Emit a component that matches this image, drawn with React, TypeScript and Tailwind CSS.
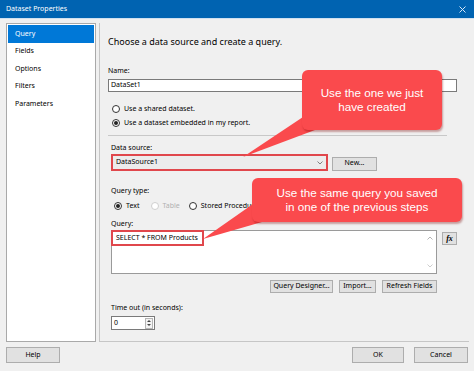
function Radio({ checked, disabled }: { checked?: boolean; disabled?: boolean }) {
  return (
    <span
      className={`flex items-center justify-center w-[8px] h-[8px] rounded-full border bg-white ${
        disabled ? "border-[#cfcfcf]" : "border-[#333]"
      }`}
    >
      {checked && <span className="w-[4px] h-[4px] rounded-full bg-[#222]" />}
    </span>
  );
}

function Btn({ label, className = "" }: { label: string; className?: string }) {
  return (
    <div
      className={`flex items-center justify-center bg-[#e1e1e1] border border-[#adadad] text-[7px] text-black ${className}`}
    >
      {label}
    </div>
  );
}

const navItems = ["Query", "Fields", "Options", "Filters", "Parameters"];

export default function App() {
  return (
    <div className="relative w-[474px] h-[371px] overflow-hidden bg-[#f0f0f0] font-['Noto_Sans',sans-serif] text-black">
      {/* Title bar */}
      <div className="flex items-center justify-between h-[19px] bg-[#0063b1] pl-[6px] pr-[8px] border-b border-[#cfe0f0]">
        <span className="text-[7px] text-white">Dataset Properties</span>
        <svg width="7" height="7" viewBox="0 0 7 7">
          <path d="M0.5 0.5 L6.5 6.5 M6.5 0.5 L0.5 6.5" stroke="#d6e8f8" strokeWidth="1" />
        </svg>
      </div>

      {/* Body */}
      <div className="flex pt-[4px] pl-[6px] pr-[5px]">
        {/* Nav */}
        <div className="w-[91px] h-[319px] border border-[#a9a9a9] bg-white p-px">
          {navItems.map((item, i) => (
            <div
              key={item}
              className={`flex items-center h-[17.5px] pl-[7px] text-[7px] ${
                i === 0 ? "bg-[#0078d7] text-white" : "text-black"
              }`}
            >
              {item}
            </div>
          ))}
        </div>

        {/* Content */}
        <div className="ml-[3px] flex-1 h-[319px] border-l border-b border-[#c6c6c6] pl-[8px] pr-[12px] flex flex-col">
          <div className="mt-[13px] h-[12px] leading-[12px] text-[9px]">
            Choose a data source and create a query.
          </div>
          <div className="mt-[18px] h-[10px] leading-[10px] text-[7px]">Name:</div>
          <div className="mt-[3px] h-[13px] border border-[#7a7a7a] bg-white flex items-center pl-[2px] text-[7px]">
            DataSet1
          </div>
          <div className="mt-[10px] h-[14px] flex items-center pl-[4px] gap-[4px] text-[7px]">
            <Radio />
            <span>Use a shared dataset.</span>
          </div>
          <div className="h-[14px] flex items-center pl-[4px] gap-[4px] text-[7px]">
            <Radio checked />
            <span>Use a dataset embedded in my report.</span>
          </div>
          <div className="mt-[5px] h-px bg-[#c8c8c8] mr-[10px]" />

          <div className="pl-[3px] flex flex-col">
            <div className="mt-[7px] h-[10px] leading-[10px] text-[7px]">Data source:</div>
            <div className="mt-px flex items-center">
              <div className="w-[217px] h-[17px] border-2 border-[#e0474c] bg-[#ececec] flex items-center justify-between pl-[3px] pr-[3px] text-[7px]">
                <span>DataSource1</span>
                <svg width="6" height="4" viewBox="0 0 6 4">
                  <path d="M0.5 0.5 L3 3 L5.5 0.5" stroke="#666" strokeWidth="0.8" fill="none" />
                </svg>
              </div>
              <Btn label="New..." className="ml-[4px] mt-[2px] w-[45px] h-[14px]" />
            </div>

            <div className="mt-[15px] h-[10px] leading-[10px] text-[7px]">Query type:</div>
            <div className="mt-[3px] h-[14px] flex items-center pl-[3px] text-[7px]">
              <Radio checked />
              <span className="ml-[4px]">Text</span>
              <span className="ml-[12px]">
                <Radio disabled />
              </span>
              <span className="ml-[3px] text-[#b0b0b0]">Table</span>
              <span className="ml-[9px]">
                <Radio />
              </span>
              <span className="ml-[4px]">Stored Procedure</span>
            </div>

            <div className="mt-[6px] h-[10px] leading-[10px] text-[7px]">Query:</div>
            <div className="mt-px flex items-start">
              <div className="relative w-[326px] h-[44px] border border-[#9a9a9a] bg-white">
                <div className="absolute left-[-1px] top-[-1px] w-[93px] h-[16px] border-2 border-[#e0474c] flex items-center pl-[3px] text-[7px]">
                  SELECT * FROM Products
                </div>
                <div className="absolute right-0 top-0 bottom-0 w-[12px] flex flex-col items-center justify-between py-[5px]">
                  <svg width="6" height="4" viewBox="0 0 6 4">
                    <path d="M0.5 3.5 L3 1 L5.5 3.5" stroke="#a0a0a0" strokeWidth="0.8" fill="none" />
                  </svg>
                  <svg width="6" height="4" viewBox="0 0 6 4">
                    <path d="M0.5 0.5 L3 3 L5.5 0.5" stroke="#c0c0c0" strokeWidth="0.8" fill="none" />
                  </svg>
                </div>
              </div>
              <div className="ml-[5px] mt-[2px] w-[15px] h-[13px] bg-[#e1e1e1] border border-[#adadad] flex items-center justify-center font-['Liberation_Serif',serif] italic font-bold text-[8px]">
                fx
              </div>
            </div>

            <div className="mt-[6px] flex justify-end gap-[6px] pr-[20px]">
              <Btn label="Query Designer..." className="w-[63px] h-[13px]" />
              <Btn label="Import..." className="w-[37px] h-[13px]" />
              <Btn label="Refresh Fields" className="w-[55px] h-[13px]" />
            </div>

            <div className="mt-[10px] h-[10px] leading-[10px] text-[7px]">Time out (in seconds):</div>
            <div className="mt-[3px] w-[44px] h-[14px] border border-[#7a7a7a] bg-white flex items-center justify-between pl-[2px] pr-px text-[7px]">
              <span>0</span>
              <div className="w-[8px] h-[11px] border border-[#b5b5b5] bg-[#f3f3f3] flex flex-col items-center justify-center gap-[2px]">
                <svg width="4" height="2" viewBox="0 0 4 2">
                  <path d="M0 2 L2 0 L4 2 Z" fill="#444" />
                </svg>
                <svg width="4" height="2" viewBox="0 0 4 2">
                  <path d="M0 0 L2 2 L4 0 Z" fill="#444" />
                </svg>
              </div>
            </div>
          </div>
        </div>
      </div>

      {/* Footer buttons */}
      <div className="mt-[5px] flex items-center px-[6px]">
        <Btn label="Help" className="w-[54px] h-[16px]" />
        <div className="ml-auto flex gap-[10px]">
          <Btn label="OK" className="w-[52px] h-[16px] border-[#0078d7]" />
          <Btn label="Cancel" className="w-[54px] h-[16px]" />
        </div>
      </div>

      {/* Callout tails */}
      <svg className="absolute left-0 top-0 pointer-events-none" width="474" height="371">
        <polygon points="243,157 303,117 315,130" fill="#fa4a4d" />
        <polygon points="203,239 253,204 262,222" fill="#fa4a4d" />
      </svg>

      {/* Callouts */}
      <div className="absolute left-[302px] top-[70px] w-[140px] h-[60px] rounded-[6px] bg-[#fa4a4d] shadow-[1px_2px_2px_rgba(120,0,0,0.35)] flex flex-col items-center justify-center font-['Liberation_Sans',Arial,sans-serif] text-[11.7px] leading-[14px] text-white">
        <span>Use the one we just</span>
        <span>have created</span>
      </div>
      <div className="absolute left-[252px] top-[178px] w-[210px] h-[44px] rounded-[6px] bg-[#fa4a4d] shadow-[1px_2px_2px_rgba(120,0,0,0.35)] flex flex-col items-center justify-center font-['Liberation_Sans',Arial,sans-serif] text-[11.7px] leading-[14px] text-white">
        <span>Use the same query you saved</span>
        <span>in one of the previous steps</span>
      </div>
    </div>
  );
}
